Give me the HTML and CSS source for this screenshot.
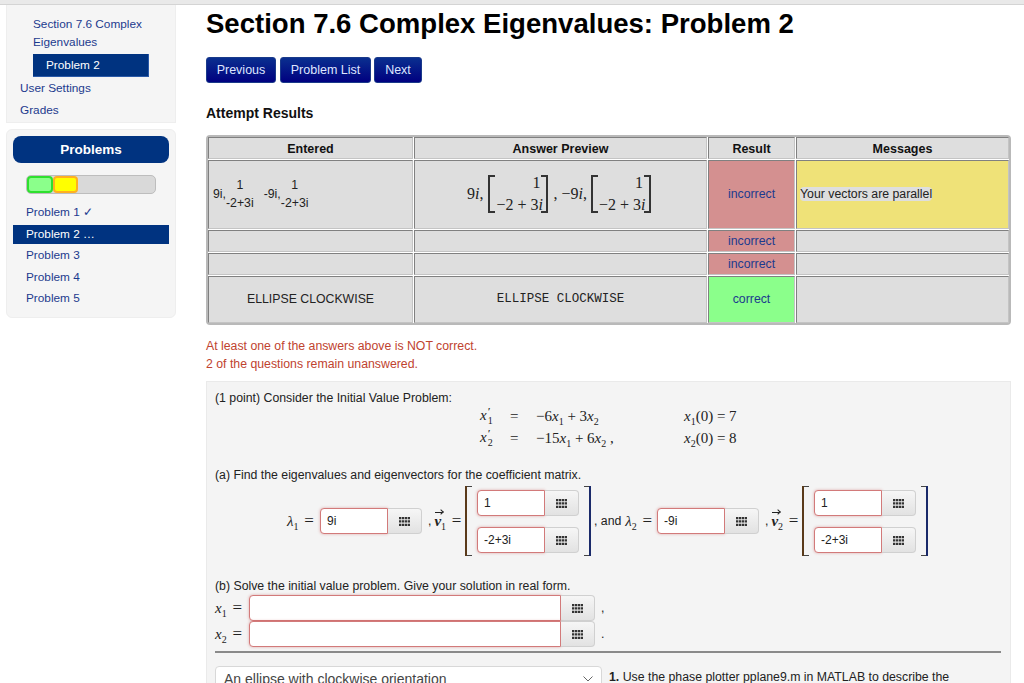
FILE: index.html
```html
<!DOCTYPE html>
<html lang="en">
<head>
<meta charset="utf-8">
<title>Section 7.6 Complex Eigenvalues: Problem 2</title>
<link rel="stylesheet" href="styles.css">
</head>
<body>
<svg class="defs" width="0" height="0"><symbol id="grid" viewBox="0 0 11 9"><path d="M0 0h2.3v2.3H0zM2.9 0h2.3v2.3H2.9zM5.8 0h2.3v2.3H5.8zM8.7 0H11v2.3H8.7zM0 3.3h2.3v2.3H0zM2.9 3.3h2.3v2.3H2.9zM5.8 3.3h2.3v2.3H5.8zM8.7 3.3H11v2.3H8.7zM0 6.7h2.3V9H0zM2.9 6.7h2.3V9H2.9zM5.8 6.7h2.3V9H5.8zM8.7 6.7H11V9H8.7z"/></symbol></svg>
<div class="topbar"></div>
<div class="page">
  <aside class="sidebar">
    <nav class="well nav-top">
      <a class="nav-head">Homework Sets</a>
      <a class="nav-sub">Section 7.6 Complex Eigenvalues</a>
      <a class="nav-active">Problem 2</a>
      <a class="nav-item">User Settings</a>
      <a class="nav-item">Grades</a>
    </nav>
    <nav class="well nav-problems">
      <div class="problems-head">Problems</div>
      <div class="progress"><span class="seg seg-green"></span><span class="seg seg-yellow"></span></div>
      <a class="prob">Problem 1 ✓</a>
      <a class="prob prob-active">Problem 2 …</a>
      <a class="prob">Problem 3</a>
      <a class="prob">Problem 4</a>
      <a class="prob">Problem 5</a>
    </nav>
  </aside>
  <main class="main">
    <h1 class="title">Section 7.6 Complex Eigenvalues: Problem 2</h1>
    <div class="btns"><a class="btn btn-prev">Previous</a><a class="btn btn-list">Problem List</a><a class="btn btn-next">Next</a></div>
    <h2 class="attempt">Attempt Results</h2>
    <div class="table-wrap">
    <table class="results">
      <colgroup><col class="c1"><col class="c2"><col class="c3"><col class="c4"></colgroup>
      <tr class="r-head"><th>Entered</th><th>Answer Preview</th><th>Result</th><th>Messages</th></tr>
      <tr class="r-big">
        <td class="entered"><span class="e1">9i,</span><span class="stack"><span>1</span><span>-2+3i</span></span><span class="e2">-9i,</span><span class="stack"><span>1</span><span>-2+3i</span></span></td>
        <td class="tex-cell"><span class="tex">9<i>i</i>,</span><span class="bmat"><span class="b1">1</span><span class="b2">−2 + 3<i>i</i></span></span><span class="tex tex2">, −9<i>i</i>,</span><span class="bmat"><span class="b1">1</span><span class="b2">−2 + 3<i>i</i></span></span></td>
        <td class="bad">incorrect</td>
        <td class="msg"><span class="msg-text">Your vectors are parallel</span></td>
      </tr>
      <tr class="r-small"><td></td><td></td><td class="bad">incorrect</td><td></td></tr>
      <tr class="r-small"><td></td><td></td><td class="bad">incorrect</td><td></td></tr>
      <tr class="r-last"><td class="ctr">ELLIPSE CLOCKWISE</td><td class="ctr mono">ELLIPSE CLOCKWISE</td><td class="good">correct</td><td></td></tr>
    </table>
    </div>
    <div class="feedback">At least one of the answers above is NOT correct.<br>2 of the questions remain unanswered.</div>
    <section class="problem">
      <p class="ptext">(1 point) Consider the Initial Value Problem:</p>
      <div class="system">
        <div class="sys-a">
          <span class="m"><i>x</i><span class="ss"><span class="pr">′</span><span>1</span></span></span><span class="m">=</span><span class="m">−6<i>x</i><sub>1</sub> + 3<i>x</i><sub>2</sub></span>
          <span class="m"><i>x</i><span class="ss"><span class="pr">′</span><span>2</span></span></span><span class="m">=</span><span class="m">−15<i>x</i><sub>1</sub> + 6<i>x</i><sub>2</sub> ,</span>
        </div>
        <div class="sys-b">
          <span class="m"><i>x</i><sub>1</sub>(0)</span><span class="m">=</span><span class="m">7</span>
          <span class="m"><i>x</i><sub>2</sub>(0)</span><span class="m">=</span><span class="m">8</span>
        </div>
      </div>
      <p class="ptext part-a">(a) Find the eigenvalues and eigenvectors for the coefficient matrix.</p>
      <div class="eigen">
        <span class="m lab"><i>λ</i><sub>1</sub> <span class="eq">=</span></span>
        <span class="field"><input class="inp inp-s" value="9i"><span class="kbd"><svg class="gi"><use href="#grid"/></svg></span></span>
        <span class="vec-group"><span class="txt">,</span><span class="m vec"><b class="vbold"><i>v</i></b><sub>1</sub> <span class="eq">=</span></span></span>
        <span class="matrix">
          <span class="field"><input class="inp inp-s" value="1"><span class="kbd"><svg class="gi"><use href="#grid"/></svg></span></span>
          <span class="field"><input class="inp inp-s" value="-2+3i"><span class="kbd"><svg class="gi"><use href="#grid"/></svg></span></span>
        </span>
        <span class="and-group"><span class="txt">, and</span><span class="m and-lab"><i>λ</i><sub>2</sub> <span class="eq">=</span></span></span>
        <span class="field"><input class="inp inp-s" value="-9i"><span class="kbd"><svg class="gi"><use href="#grid"/></svg></span></span>
        <span class="vec-group"><span class="txt">,</span><span class="m vec"><b class="vbold"><i>v</i></b><sub>2</sub> <span class="eq">=</span></span></span>
        <span class="matrix">
          <span class="field"><input class="inp inp-s" value="1"><span class="kbd"><svg class="gi"><use href="#grid"/></svg></span></span>
          <span class="field"><input class="inp inp-s" value="-2+3i"><span class="kbd"><svg class="gi"><use href="#grid"/></svg></span></span>
        </span>
      </div>
      <p class="ptext part-b">(b) Solve the initial value problem. Give your solution in real form.</p>
      <div class="sol"><span class="m sol-lab"><i>x</i><sub>1</sub> <span class="eq">=</span></span><span class="field"><input class="inp inp-l"><span class="kbd"><svg class="gi"><use href="#grid"/></svg></span></span><span class="txt sol-end">,</span></div>
      <div class="sol"><span class="m sol-lab"><i>x</i><sub>2</sub> <span class="eq">=</span></span><span class="field"><input class="inp inp-l"><span class="kbd"><svg class="gi"><use href="#grid"/></svg></span></span><span class="txt sol-end">.</span></div>
      <hr class="rule">
      <div class="mc">
        <div class="select">An ellipse with clockwise orientation<svg class="chev" viewBox="0 0 10 6"><path d="M.5.5 5 5 9.500.5" fill="none" stroke="#666" stroke-width="1"/></svg></div>
        <p class="mc-text"><b>1.</b> Use the phase plotter pplane9.m in MATLAB to describe the</p>
      </div>
    </section>
  </main>
</div>
</body>
</html>
```

FILE: styles.css
```css
html, body { margin: 0; padding: 0; height: 683px; overflow: hidden; background: #fff; }
body { font-family: "Liberation Sans", Arial, sans-serif; font-size: 12.3px; color: #222; position: relative; }
.defs { position: absolute; }
.topbar { position: absolute; top: 0; left: 0; right: 0; height: 4px; background: #e9e9e9; border-bottom: 1px solid #d4d4d4; z-index: 2; }
.page { display: flex; align-items: flex-start; }

.sidebar { width: 170px; margin-left: 6px; flex: none; font-size: 11.8px; }
.well { background: #f5f5f5; box-sizing: border-box; display: flex; flex-direction: column; }
.well a { color: #1c3a8e; display: block; }
.nav-top { margin-top: -8px; height: 131px; padding-left: 13px; border: 1px solid #eee; border-top: 0; }
.nav-head { line-height: 18px; height: 14px; margin-left: 6px; }
.nav-sub { width: 118px; padding-left: 13px; line-height: 18px; margin-top: 9px; }
.nav-active { width: 116px; box-sizing: border-box; margin: 3px 0 0 13px; height: 23px; line-height: 23px; padding-left: 13px; background: #003380; color: #fff !important; border: 1px solid #2a5aa8; border-width: 0 1px 1px 0; }
.nav-item { line-height: 22px; }
.nav-problems { margin-top: 6px; height: 189px; border: 1px solid #eee; border-radius: 6px; padding: 6px 6px 0; }
.problems-head { height: 27px; line-height: 27px; background: #003380; color: #fff; text-align: center; font-weight: bold; font-size: 13.5px; border-radius: 8px; }
.progress { display: flex; height: 19px; box-sizing: border-box; margin: 12px 13px 0 13px; background: #d9d9d9; border: 1px solid #bdbdbd; border-radius: 5px; }
.seg { display: block; box-sizing: border-box; height: 17px; border-radius: 4px; border: 2px solid; width: 26px; }
.seg-green { background: #8bff8b; border-color: #2ee02e; }
.seg-yellow { background: #ffff00; border-color: #ffb020; width: 25px; }
.prob { padding-left: 13px; height: 21.5px; line-height: 21.5px; }
.progress + .prob { margin-top: 8px; }
.prob-active { background: #003380; color: #fff !important; height: 19px; line-height: 19px; margin: 1px 0 1.5px; }

.main { width: 804px; margin-left: 30px; flex: none; }
.title { margin: 9px 0 0; font-size: 27.55px; line-height: 30px; font-weight: bold; color: #000; white-space: nowrap; }
.btns { display: flex; margin-top: 18px; gap: 4px; height: 26px; }
.btn { display: block; box-sizing: border-box; text-align: center; height: 26px; line-height: 25px; color: #dfe6ff; font-size: 12.5px; background: linear-gradient(#0a2f8f, #000080); border: 1px solid #1a3a8a; border-radius: 3px; }
.btn-prev { width: 70px; }
.btn-list { width: 91px; }
.btn-next { width: 48px; margin-left: -1px; }
.attempt { margin: 20px 0 0; font-size: 14px; line-height: 20px; font-weight: bold; color: #111; }

.table-wrap { margin-top: 12px; width: 805px; box-sizing: border-box; border: 2px solid #b9b9b9; border-radius: 4px; background: #fff; }
.results { width: 803px; table-layout: fixed; border-collapse: separate; border-spacing: 1px; margin: -1px; }
.c1 { width: 205px; }
.c2 { width: 293px; }
.c3 { width: 87px; }
.c4 { width: 213px; }
.results th, .results td { box-sizing: border-box; background: #dedede; border: 1px solid; border-color: #808080 #c4c4c4 #c4c4c4 #808080; padding: 0 3px 1px; text-align: center; font-size: 12.3px; }
.results th { font-size: 12.5px; color: #111; padding: 1px 3px 0; }
.r-head { height: 22px; }
.r-big { height: 69px; }
.r-small { height: 22px; }
.r-last { height: 47px; }
.results td.entered { text-align: left; font-size: 12.3px; padding-left: 4px; white-space: nowrap; color: #222; }
.stack { display: inline-flex; flex-direction: column; align-items: center; vertical-align: middle; line-height: 18px; }
.e2 { margin-left: 10px; }
.e1, .e2 { vertical-align: middle; }
.results td.tex-cell { font-family: "Liberation Serif", serif; font-size: 16px; white-space: nowrap; color: #222; padding-left: 52px; text-align: left; }
.tex { vertical-align: middle; }
.tex2 { margin: 0 -1px 0 5px; }
.bmat { display: inline-flex; flex-direction: column; justify-content: center; vertical-align: middle; text-align: right; height: 38px; width: 60px; margin-left: 5px; box-sizing: border-box; border: solid #333; border-width: 0 2px; padding: 0 6px; position: relative; line-height: 22px; }
.bmat::before, .bmat::after { content: ""; position: absolute; top: 0; bottom: 0; width: 5px; border-top: 2px solid #333; border-bottom: 2px solid #333; }
.bmat::before { left: 0; }
.bmat::after { right: 0; }
.results td.bad { background: #d49090; color: #1c3a8e; }
.results td.good { background: #8bff8b; color: #1c3a8e; }
.results td.msg { background: #efe278; text-align: left; padding-left: 3px; }
.msg-text { background: #dedede; border-radius: 4px; color: #222; }
.ctr { color: #222; }
.results td.mono { font-family: "Liberation Mono", monospace; font-size: 12.5px; }

.feedback { margin-top: 12px; color: #c0432f; line-height: 18px; }
.problem { margin-top: 8px; width: 805px; box-sizing: border-box; height: 320px; background: #f4f4f4; border: 1px solid #eaeaea; padding: 7px 8px; }
.ptext { margin: 0; line-height: 18px; color: #222; }
.m { font-family: "Liberation Serif", serif; font-size: 15px; color: #222; white-space: nowrap; }
.m sub { font-size: 10px; line-height: 0; }
.ss { display: inline-flex; flex-direction: column; vertical-align: middle; font-size: 10px; line-height: 9px; margin-left: 1px; }
.pr { font-weight: bold; }
.system { display: flex; height: 44px; margin-top: -2px; padding-left: 265px; }
.sys-a, .sys-b { display: grid; align-items: center; grid-auto-rows: 22px; }
.sys-a { grid-template-columns: 30px 26px 148px; }
.sys-b { grid-template-columns: 33px 12px 12px; }
.part-a { margin-top: 17px; }
.eigen { display: flex; align-items: center; justify-content: center; height: 70px; margin-top: 2px; padding-right: 2px; }
.field { display: flex; }
.inp { box-sizing: border-box; height: 26px; padding: 0 6px; font: 12px "Liberation Sans", sans-serif; color: #222; background: #fff; border: 1px solid #d27a7a; border-radius: 4px 0 0 4px; box-shadow: 0 0 3px rgba(200,80,80,.45); outline: 0; }
.inp-s { width: 68px; }
.inp-l { width: 312px; }
.kbd { display: flex; align-items: center; justify-content: center; box-sizing: border-box; width: 34px; height: 26px; background: linear-gradient(#f6f6f6, #e2e2e2); border: 1px solid #d0d0d0; border-left: 0; border-radius: 0 4px 4px 0; }
.gi { width: 11px; height: 9px; fill: #333; }
.eq { font-size: 17px; margin-left: 2px; }
.lab { width: 33px; flex: none; }
.vec-group { width: 43px; flex: none; display: flex; align-items: center; padding-left: 6px; box-sizing: border-box; }
.vec { margin-left: 3px; }
.vbold { position: relative; }
.vbold::before { content: ""; position: absolute; left: 1px; top: -1px; width: 7px; height: 1px; background: #222; }
.vbold::after { content: ""; position: absolute; left: 5px; top: -3px; width: 3px; height: 3px; border-top: 1px solid #222; border-right: 1px solid #222; transform: rotate(45deg); transform-origin: center; }
.matrix { display: flex; flex: none; flex-direction: column; justify-content: space-between; box-sizing: border-box; width: 126px; height: 70px; padding: 4px 0 3px 10px; border-left: 2px solid #5a3a1a; border-right: 2px solid #1a2a6a; position: relative; }
.matrix::before, .matrix::after { content: ""; position: absolute; top: 0; bottom: 0; width: 5px; border-top: 1.5px solid #444; border-bottom: 1.5px solid #444; }
.matrix::before { left: 0; }
.matrix::after { right: 0; }
.and-group { width: 66px; flex: none; display: flex; align-items: center; padding-left: 3px; box-sizing: border-box; }
.and-lab { margin-left: 4px; }
.txt { color: #222; }
.part-b { margin-top: 21px; }
.sol { display: flex; align-items: center; height: 26px; }
.sol-lab { width: 34px; flex: none; }
.sol-end { margin-left: 6px; }
.rule { height: 2px; border: 0; background: #8a8a8a; margin: 4px 0 0; width: 786px; }
.mc { display: flex; margin-top: 13px; align-items: flex-start; }
.select { position: relative; box-sizing: border-box; width: 387px; height: 40px; padding-left: 8px; padding-top: 4px; font-size: 14px; line-height: 16px; color: #444; background: #fff; border: 1px solid #d8d8d8; border-radius: 4px; flex: none; }
.chev { position: absolute; right: 8px; top: 9px; width: 10px; height: 6px; }
.mc-text { margin: 3px 0 0 7px; line-height: 16px; color: #222; white-space: nowrap; }
```
